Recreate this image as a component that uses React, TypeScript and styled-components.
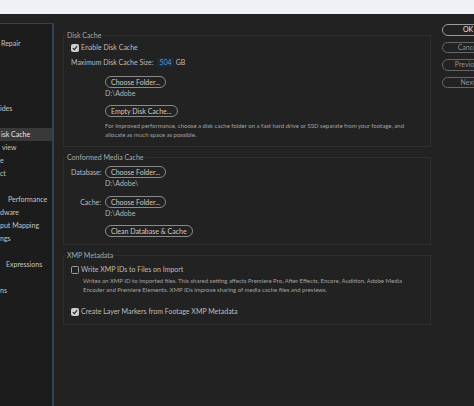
import React from 'react';
import styled, { createGlobalStyle } from 'styled-components';

const Global = createGlobalStyle`
  html, body { margin: 0; padding: 0; background: #222222; }
  body { font-family: Lato, "Noto Sans", "Liberation Sans", sans-serif; -webkit-font-smoothing: antialiased; }
  * { box-sizing: border-box; }
`;

const Page = styled.div`
  width: 474px;
  height: 406px;
  overflow: hidden;
  background: #222222;
  display: flex;
  flex-direction: column;
`;

const TopStrip = styled.div`
  flex: none;
  height: 14px;
  background: #eef2f7;
`;

const Body = styled.div`
  flex: 1;
  min-height: 0;
  display: flex;
  padding-top: 9px;
`;

const Sidebar = styled.nav`
  flex: none;
  width: 54px;
  background: #1c1c1c;
  border-top: 1px solid #2f4359;
  border-right: 2px solid #2f4359;
  overflow: hidden;
  display: flex;
  flex-direction: column;
`;

const SideItem = styled.div<{ $pad?: number; $selected?: boolean }>`
  flex: none;
  height: 13px;
  line-height: 13px;
  font-size: 7px;
  white-space: nowrap;
  overflow: hidden;
  padding-left: ${(p) => p.$pad ?? 0}px;
  color: ${(p) => (p.$selected ? '#e8e8e8' : '#c4c4c4')};
  background: ${(p) => (p.$selected ? '#393939' : 'transparent')};
`;

const Main = styled.main`
  flex: none;
  width: 368px;
  margin-left: 9px;
  padding-top: 8px;
  display: flex;
  flex-direction: column;
`;

const Section = styled.fieldset<{ $pb: number }>`
  margin: 0;
  min-width: 0;
  border: 1px solid #2e2e2e;
  padding: 0 0 ${(p) => p.$pb}px 7px;
  display: flex;
  flex-direction: column;
  & + & {
    margin-top: 6px;
  }
`;

const Legend = styled.legend`
  margin-left: -5px;
  padding: 0 1px;
  font-size: 7px;
  line-height: 9px;
  color: #a8a8a8;
`;

const Row = styled.div<{ $mt: number; $indent?: number }>`
  display: flex;
  align-items: center;
  min-height: 9px;
  margin-top: ${(p) => p.$mt}px;
  padding-left: ${(p) => p.$indent ?? 0}px;
  font-size: 7px;
  line-height: 9px;
  color: #bdbdbd;
  white-space: nowrap;
`;

const FieldLabel = styled.span`
  width: 30px;
  margin-right: 4px;
  text-align: right;
  font-size: 7px;
  color: #bcbcbc;
  white-space: nowrap;
`;

const PathText = styled.span`
  font-size: 7px;
  color: #b4b4b4;
`;

const Pill = styled.button`
  height: 12px;
  padding: 0 5px;
  border: 1px solid #8a8a8a;
  border-radius: 6px;
  background: transparent;
  color: #cacaca;
  font-family: inherit;
  font-size: 7px;
  line-height: 10px;
  white-space: nowrap;
`;

const ValueField = styled.span`
  margin-left: 4px;
  padding: 0 2px;
  background: #1e2935;
  color: #4a9bf0;
  line-height: 9px;
`;

const Unit = styled.span`
  margin-left: 2px;
`;

const Desc = styled.div<{ $mt: number; $indent: number }>`
  margin-top: ${(p) => p.$mt}px;
  padding-left: ${(p) => p.$indent}px;
  font-size: 6px;
  line-height: 8.5px;
  color: #a2a2a2;
  white-space: nowrap;
`;

const Box = styled.span<{ $checked: boolean }>`
  flex: none;
  width: 8px;
  height: 8px;
  margin-right: 2px;
  border-radius: 1.5px;
  display: inline-flex;
  align-items: center;
  justify-content: center;
  background: ${(p) => (p.$checked ? '#cdcdcd' : 'transparent')};
  border: 1px solid ${(p) => (p.$checked ? '#cdcdcd' : '#9c9c9c')};
`;

const Actions = styled.div`
  flex: none;
  width: 52px;
  margin-left: 11px;
  padding-top: 1px;
  display: flex;
  flex-direction: column;
  gap: 6px;
`;

const ActionButton = styled.button<{ $primary?: boolean }>`
  height: 11.5px;
  padding: 0;
  border-radius: 6px;
  border: 1px solid ${(p) => (p.$primary ? '#9c9c9c' : '#686868')};
  background: transparent;
  color: ${(p) => (p.$primary ? '#e8e8e8' : '#8f8f8f')};
  font-family: inherit;
  font-size: 7px;
  line-height: 9px;
`;

const Check = ({ checked }: { checked: boolean }) => (
  <Box $checked={checked}>
    {checked && (
      <svg width="6" height="6" viewBox="0 0 6 6">
        <path d="M0.8 3.1 L2.4 4.6 L5.2 1.2" fill="none" stroke="#2a2a2a" strokeWidth="1.1" />
      </svg>
    )}
  </Box>
);

const sideItems: { text: string; pad?: number; selected?: boolean }[] = [
  { text: '' },
  { text: 'Repair', pad: 1 },
  { text: '' },
  { text: '' },
  { text: '' },
  { text: '' },
  { text: 'ides', pad: 0 },
  { text: '' },
  { text: 'isk Cache', pad: 1, selected: true },
  { text: 'view', pad: 2 },
  { text: 'e', pad: 0 },
  { text: 'ct', pad: 0 },
  { text: '' },
  { text: 'Performance', pad: 8 },
  { text: 'dware', pad: 0 },
  { text: 'put Mapping', pad: 0 },
  { text: 'ngs', pad: 0 },
  { text: '' },
  { text: 'Expressions', pad: 6 },
  { text: '' },
  { text: 'ns', pad: 0 },
];

export default function App() {
  return (
    <Page>
      <Global />
      <TopStrip />
      <Body>
        <Sidebar>
          {sideItems.map((it, i) => (
            <SideItem key={i} $pad={it.pad} $selected={it.selected}>
              {it.text}
            </SideItem>
          ))}
        </Sidebar>
        <Main>
          <Section $pb={7}>
            <Legend>Disk Cache</Legend>
            <Row $mt={3}>
              <Check checked />
              Enable Disk Cache
            </Row>
            <Row $mt={6}>
              Maximum Disk Cache Size:
              <ValueField>504</ValueField>
              <Unit>GB</Unit>
            </Row>
            <Row $mt={9} $indent={34}>
              <Pill>Choose Folder...</Pill>
            </Row>
            <Row $mt={1} $indent={34}>
              <PathText>D:\Adobe</PathText>
            </Row>
            <Row $mt={7} $indent={34}>
              <Pill>Empty Disk Cache...</Pill>
            </Row>
            <Desc $mt={5} $indent={34}>
              For improved performance, choose a disk cache folder on a fast hard drive or SSD separate from your footage, and
              <br />
              allocate as much space as possible.
            </Desc>
          </Section>

          <Section $pb={7}>
            <Legend>Conformed Media Cache</Legend>
            <Row $mt={4}>
              <FieldLabel>Database:</FieldLabel>
              <Pill>Choose Folder...</Pill>
            </Row>
            <Row $mt={1} $indent={34}>
              <PathText>D:\Adobe\</PathText>
            </Row>
            <Row $mt={8}>
              <FieldLabel>Cache:</FieldLabel>
              <Pill>Choose Folder...</Pill>
            </Row>
            <Row $mt={1} $indent={34}>
              <PathText>D:\Adobe</PathText>
            </Row>
            <Row $mt={7} $indent={34}>
              <Pill>Clean Database &amp; Cache</Pill>
            </Row>
          </Section>

          <Section $pb={8}>
            <Legend>XMP Metadata</Legend>
            <Row $mt={5}>
              <Check checked={false} />
              Write XMP IDs to Files on Import
            </Row>
            <Desc $mt={3} $indent={12}>
              Writes an XMP ID to imported files. This shared setting affects Premiere Pro, After Effects, Encore, Audition, Adobe Media
              <br />
              Encoder and Premiere Elements. XMP IDs improve sharing of media cache files and previews.
            </Desc>
            <Row $mt={13}>
              <Check checked />
              Create Layer Markers from Footage XMP Metadata
            </Row>
          </Section>
        </Main>
        <Actions>
          <ActionButton $primary>OK</ActionButton>
          <ActionButton>Cancel</ActionButton>
          <ActionButton>Previous</ActionButton>
          <ActionButton>Next</ActionButton>
        </Actions>
      </Body>
    </Page>
  );
}
